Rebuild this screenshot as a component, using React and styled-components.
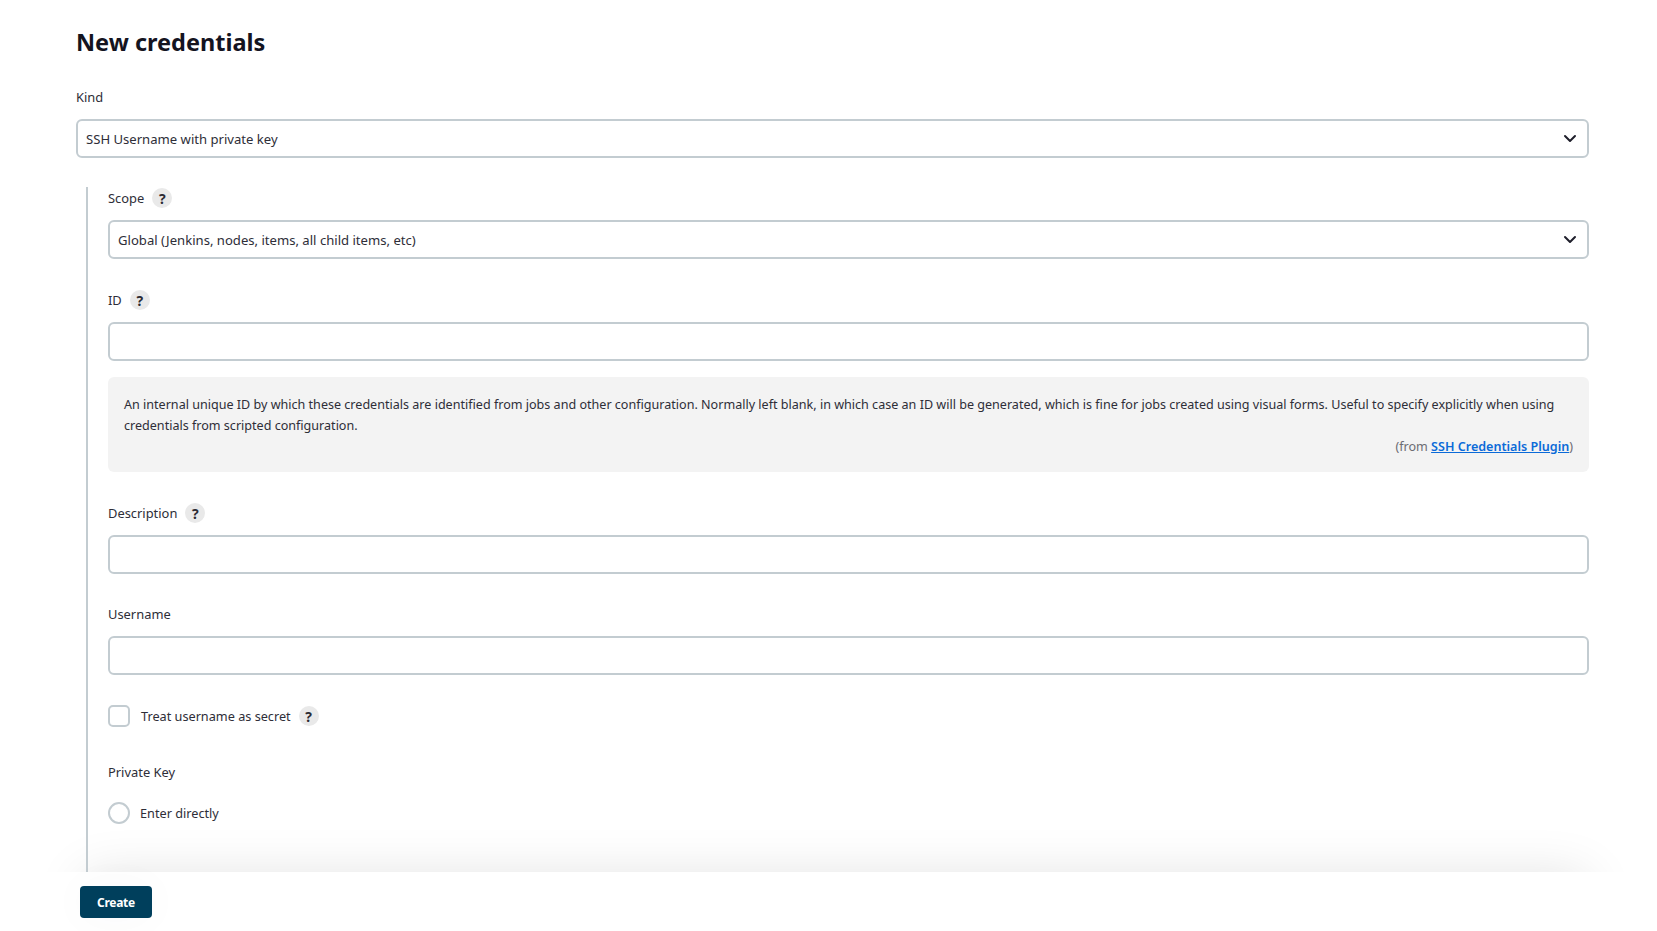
import styled, { createGlobalStyle } from "styled-components";

const GlobalStyle = createGlobalStyle`
  html {
    background: #fff;
  }
  body {
    margin: 0;
    color: #2e2e38;
    font-family: "Noto Sans", "Open Sans", sans-serif;
    font-size: 12.9px;
  }
`;

const Page = styled.div`
  display: flex;
  flex-direction: column;
  height: 931px;
  overflow: hidden;
`;
const Main = styled.main`
  flex: 1;
  min-height: 0;
  overflow: hidden;
  padding: 25px 68px 0 76px;
`;
const Title = styled.h1`
  margin: 0 0 27px;
  font-size: 23.5px;
  line-height: 34px;
  font-weight: 700;
  color: #14141f;
`;
const Field = styled.div`
  margin-bottom: ${(p) => p.$gap ?? 30}px;
`;
const LabelRow = styled.div`
  display: flex;
  align-items: center;
  gap: 8px;
  height: 22px;
  margin-bottom: ${(p) => p.$gap ?? 11}px;
`;
const Help = styled.span`
  display: inline-flex;
  align-items: center;
  justify-content: center;
  width: 20px;
  height: 20px;
  border-radius: 50%;
  background: #e9e9e9;
  font-size: 14px;
  font-weight: 700;
  color: #2b2b33;
`;
const SelectBox = styled.div`
  display: flex;
  align-items: center;
  justify-content: space-between;
  box-sizing: border-box;
  height: 39px;
  padding: 0 10px 0 8px;
  border: 2px solid #c3ccd1;
  border-radius: 6px;
  background: #fff;
  font-size: 13.1px;
`;
const Input = styled.input`
  display: block;
  box-sizing: border-box;
  width: 100%;
  height: 39px;
  border: 2px solid #c3ccd1;
  border-radius: 6px;
  background: #fff;
`;
const Section = styled.section`
  margin: 29px 0 0 10px;
  padding: 0 0 100px 20px;
  border-left: 2px solid #c3ccd1;
`;
const HelpBox = styled.div`
  margin-top: 16px;
  padding: 17px 16px 15px;
  border-radius: 6px;
  background: #f3f3f3;
  font-size: 12.57px;
  line-height: 21px;
`;
const Source = styled.div`
  text-align: right;
  color: #6c6c72;
`;
const PluginLink = styled.a`
  color: #0b6ad8;
  font-weight: 600;
  text-decoration: underline;
`;
const CheckRow = styled.label`
  display: flex;
  align-items: center;
  height: 22px;
  margin-bottom: 34px;
  font-size: 12.7px;
`;
const CheckBox = styled.span`
  box-sizing: border-box;
  width: 22px;
  height: 22px;
  margin-right: ${(p) => (p.$round ? 10 : 11)}px;
  border: 2px solid #c3ccd1;
  border-radius: ${(p) => (p.$round ? "50%" : "5px")};
`;
const CheckText = styled.span`
  margin-right: 8px;
`;
const Footer = styled.footer`
  position: relative;
  padding: 14px 68px 13px 80px;
  background: #fff;
  &::before {
    content: "";
    position: absolute;
    z-index: -1;
    top: 4px;
    left: 84px;
    right: 70px;
    height: 54px;
    box-shadow: 0 0 52px rgba(0, 0, 0, 0.12);
  }
`;
const CreateButton = styled.button`
  display: block;
  width: 72px;
  height: 32px;
  padding: 0;
  border: 0;
  border-radius: 4px;
  background: #003f5c;
  box-shadow: 0 0 40px rgba(0, 63, 92, 0.03);
  color: #fff;
  font-family: inherit;
  font-size: 12px;
  font-weight: 700;
  letter-spacing: -0.3px;
`;

function Chevron() {
  return (
    <svg width="14" height="9" viewBox="0 0 14 9" fill="none">
      <path d="M2 2l5 5 5-5" stroke="#1f1f2b" strokeWidth="2" strokeLinecap="round" strokeLinejoin="round" />
    </svg>
  );
}

export default function App() {
  return (
    <Page>
      <GlobalStyle />
      <Main>
        <Title>New credentials</Title>
        <LabelRow>Kind</LabelRow>
        <SelectBox>
          SSH Username with private key
          <Chevron />
        </SelectBox>
        <Section>
          <Field>
            <LabelRow>
              Scope <Help>?</Help>
            </LabelRow>
            <SelectBox>
              Global (Jenkins, nodes, items, all child items, etc)
              <Chevron />
            </SelectBox>
          </Field>
          <Field>
            <LabelRow>
              ID <Help>?</Help>
            </LabelRow>
            <Input />
            <HelpBox>
              An internal unique ID by which these credentials are identified from jobs and other configuration. Normally left blank, in which case an ID will be generated, which is fine for jobs created using visual forms. Useful to specify explicitly when using credentials from scripted configuration.
              <Source>
                (from <PluginLink>SSH Credentials Plugin</PluginLink>)
              </Source>
            </HelpBox>
          </Field>
          <Field $gap={29}>
            <LabelRow>
              Description <Help>?</Help>
            </LabelRow>
            <Input />
          </Field>
          <Field>
            <LabelRow>Username</LabelRow>
            <Input />
          </Field>
          <CheckRow>
            <CheckBox />
            <CheckText>Treat username as secret</CheckText>
            <Help>?</Help>
          </CheckRow>
          <LabelRow $gap={19}>Private Key</LabelRow>
          <CheckRow>
            <CheckBox $round />
            <CheckText>Enter directly</CheckText>
          </CheckRow>
        </Section>
      </Main>
      <Footer>
        <CreateButton>Create</CreateButton>
      </Footer>
    </Page>
  );
}
